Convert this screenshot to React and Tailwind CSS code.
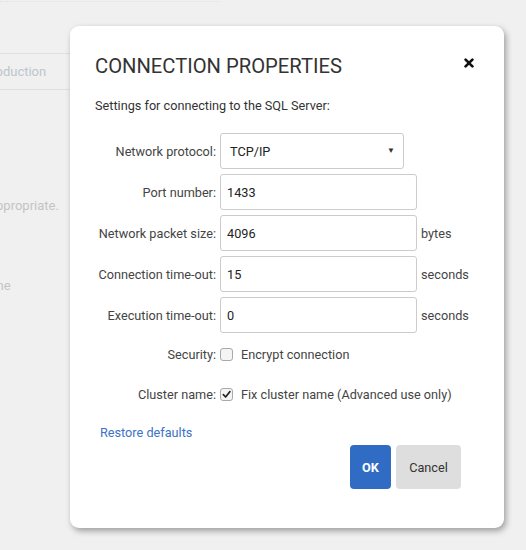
import React from "react";

function Row({ label, children, suffix }) {
  return (
    <div className="flex items-center h-[36px]">
      <div className="w-[125px] shrink-0 text-right pr-[4px] text-[12.7px] text-[#444] whitespace-nowrap">{label}</div>
      {children}
      {suffix && <div className="ml-[4px] text-[12.7px] text-[#444] whitespace-nowrap">{suffix}</div>}
    </div>
  );
}

function TextInput({ value }) {
  return (
    <div className="w-[197px] shrink-0 h-[36px] border border-[#cccccc] rounded-[3px] flex items-center px-[6px] text-[12.7px] text-[#222]">
      {value}
    </div>
  );
}

function Check({ checked, label, title }) {
  return (
    <div className="flex items-center h-[20px]">
      <div className="w-[125px] shrink-0 text-right pr-[4px] text-[12.7px] text-[#444] whitespace-nowrap">{title}</div>
      <div className="w-[13px] h-[13px] border border-[#a9a9a9] rounded-[3px] bg-[#f4f4f4] flex items-center justify-center">
        {checked && (
          <svg width="9" height="9" viewBox="0 0 10 10">
            <path d="M1.5 5.2 L4 7.8 L8.8 1.8" fill="none" stroke="#222" strokeWidth="1.8" strokeLinecap="round" strokeLinejoin="round" />
          </svg>
        )}
      </div>
      <div className="ml-[8px] text-[12.7px] text-[#444] whitespace-nowrap">{label}</div>
    </div>
  );
}

export default function App() {
  return (
    <div className="relative w-[526px] h-[550px] bg-[#f0f0f0] overflow-hidden" style={{ fontFamily: "Roboto, 'Noto Sans', sans-serif" }}>
      {/* background page */}
      <div className="w-[220px] text-[13px] text-[#c4c4c4]">
        <div className="h-[2px] border-b border-dotted border-[#e2e2e2]" />
        <div className="mt-[51px] h-[37px] border-y border-[#e0e0e0] flex items-center">
          <span className="-ml-[17px] text-[#bcc6cc]">Production</span>
        </div>
        <div className="mt-[92px] leading-[16px]">
          <div className="-ml-[20px]">for</div>
          <div className="-ml-[11px]">appropriate.</div>
        </div>
        <div className="mt-[62px] -ml-[22px]">name</div>
      </div>

      {/* dialog */}
      <div className="absolute left-[70px] top-[26px] w-[434px] h-[502px] bg-white rounded-[9px] shadow-[2px_3px_6px_rgba(0,0,0,0.35)] pl-[25px] pr-[29px] pt-[28px]">
        <div className="flex items-start justify-between">
          <div className="text-[20.2px] leading-[24px] text-[#333]">CONNECTION PROPERTIES</div>
          <svg className="mt-[4px] mr-[1px]" width="10" height="10" viewBox="0 0 10 10">
            <path d="M1.6 1.6 L8.4 8.4 M8.4 1.6 L1.6 8.4" stroke="#111" strokeWidth="2.7" strokeLinecap="round" />
          </svg>
        </div>
        <div className="mt-[18px] text-[12.7px] text-[#333]">Settings for connecting to the SQL Server:</div>

        <div className="mt-[18px] flex flex-col gap-[5px]">
          <Row label="Network protocol:">
            <div className="w-[184px] shrink-0 h-[36px] border border-[#cccccc] rounded-[3px] flex items-center justify-between pl-[9px] pr-[8px] text-[12.7px] text-[#222]">
              <span>TCP/IP</span>
              <span className="text-[8px] text-[#333]">▼</span>
            </div>
          </Row>
          <Row label="Port number:"><TextInput value="1433" /></Row>
          <Row label="Network packet size:" suffix="bytes"><TextInput value="4096" /></Row>
          <Row label="Connection time-out:" suffix="seconds"><TextInput value="15" /></Row>
          <Row label="Execution time-out:" suffix="seconds"><TextInput value="0" /></Row>

          <div className="mt-[6px]">
            <Check title="Security:" label="Encrypt connection" />
          </div>
          <div className="mt-[15px]">
            <Check checked title="Cluster name:" label="Fix cluster name (Advanced use only)" />
          </div>
        </div>

        <div className="mt-[19px] pl-[5px] text-[12.7px] text-[#3b72c6]">Restore defaults</div>

        <div className="mt-[3px] flex justify-end gap-[5px] pr-[14px]">
          <div className="w-[41px] h-[44px] rounded-[4px] bg-[#306cc4] text-white font-bold text-[12.7px] flex items-center justify-center">OK</div>
          <div className="w-[65px] h-[44px] rounded-[4px] bg-[#dedede] text-[#333] text-[12.7px] flex items-center justify-center">Cancel</div>
        </div>
      </div>
    </div>
  );
}
